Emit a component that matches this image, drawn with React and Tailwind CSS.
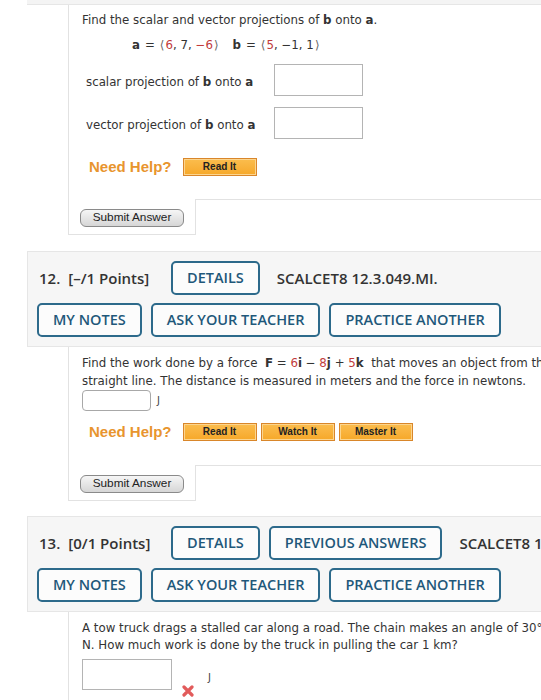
import React from "react";

const body = { fontFamily: '"DejaVu Sans", Verdana, sans-serif' };
const sans = { fontFamily: '"Open Sans", "Noto Sans", sans-serif' };
const arial = { fontFamily: '"Liberation Sans", Arial, sans-serif' };

function R({ children }) {
  return <span className="text-[#c23b3b]">{children}</span>;
}

function L() {
  return <span className="text-[#666] mr-[1px]">⟨</span>;
}
function Rb() {
  return <span className="text-[#666] ml-[1px]">⟩</span>;
}

function OrangeBtn({ children, w = "w-[74px]" }) {
  return (
    <div
      className={`${w} h-[18px] flex items-center justify-center border border-[#d9862a] bg-gradient-to-b from-[#fbbd4d] to-[#f6a828] shadow-[inset_0_0_0_1px_#fcd58e] text-[10px] font-bold text-[#222]`}
      style={arial}
    >
      {children}
    </div>
  );
}

function NeedHelp({ buttons }) {
  return (
    <div className="flex items-center pl-[7px]">
      <span className="text-[15px] font-bold text-[#e8952e] mr-[11px]" style={arial}>
        Need Help?
      </span>
      <div className="flex gap-[4px]">
        {buttons.map((b) => (
          <OrangeBtn key={b}>{b}</OrangeBtn>
        ))}
      </div>
    </div>
  );
}

function SubmitRow() {
  return (
    <div className="flex">
      <div className="w-[128px] h-[36px] border-l border-r border-b border-[#e2e2e2] pl-[11px] pt-[10px]">
        <div
          className="w-[104px] h-[18px] rounded-[6px] border border-[#8a8a8a] bg-gradient-to-b from-[#f6f6f6] to-[#d6d6d6] flex items-center justify-center text-[11.8px] text-[#222]"
          style={arial}
        >
          Submit Answer
        </div>
      </div>
      <div className="flex-1 border-t border-[#e2e2e2]" />
    </div>
  );
}

function TealBtn({ children }) {
  return (
    <div className="h-[34px] px-[14px] flex items-center border-2 border-[#2d6a8b] rounded-[5px] bg-[#fcfcfc] text-[14.5px] font-semibold text-[#1f587a] whitespace-nowrap">
      {children}
    </div>
  );
}

function Header({ num, points, row1, code }) {
  return (
    <div
      className="ml-[27px] bg-[#f6f6f6] border border-[#e6e6e6] pl-[9px] pt-[9px] pb-[9px] flex flex-col gap-[8px]"
      style={sans}
    >
      <div className="flex items-center">
        <div className="w-[134px] pl-[2px] text-[15px] font-semibold text-[#333] whitespace-nowrap">
          {num}
          <span className="ml-[8px]">{points}</span>
        </div>
        <div className="flex gap-[9px]">
          {row1.map((b) => (
            <TealBtn key={b}>{b}</TealBtn>
          ))}
        </div>
        <div className="ml-[17px] text-[15px] font-semibold text-[#333] whitespace-nowrap">{code}</div>
      </div>
      <div className="flex gap-[9px]">
        <TealBtn>MY NOTES</TealBtn>
        <TealBtn>ASK YOUR TEACHER</TealBtn>
        <TealBtn>PRACTICE ANOTHER</TealBtn>
      </div>
    </div>
  );
}

function Cross() {
  return (
    <svg width="12" height="12" viewBox="0 0 12 12">
      <path d="M2 2 L10 10 M10 2 L2 10" stroke="#e25b5b" strokeWidth="3.2" strokeLinecap="round" />
    </svg>
  );
}

export default function App() {
  return (
    <div className="w-[541px] h-[700px] overflow-hidden bg-white text-[#333]" style={body}>
      <div className="w-[820px]">
        {/* previous header remnant */}
        <div className="ml-[27px] h-[5px] bg-[#f4f4f4] border-b border-[#e6e6e6]" />

        {/* Question 11 body */}
        <div className="ml-[68px]">
          <div className="border-l border-[#e2e2e2] pl-[13px] pt-[6px] pb-[23px] text-[11.8px] leading-[18px]">
            <div>
              Find the scalar and vector projections of <b>b</b> onto <b>a</b>.
            </div>
            <div className="mt-[7px] pl-[50px] whitespace-nowrap flex items-center">
              <span>
                <b>a</b>
                <span className="mx-[5px]">=</span>
                <L />
                <R>6</R>, 7, <R>−6</R>
                <Rb />
              </span>
              <span className="ml-[14px]">
                <b>b</b>
                <span className="mx-[5px]">=</span>
                <L />
                <R>5</R>, −1, 1
                <Rb />
              </span>
            </div>
            <div className="mt-[10px] flex items-center pl-[4px]">
              <div className="w-[188px] pt-[3px]">
                scalar projection of <b>b</b> onto <b>a</b>
              </div>
              <div className="w-[89px] h-[32px] border border-[#b4b4b4] bg-white" />
            </div>
            <div className="mt-[11px] flex items-center pl-[4px]">
              <div className="w-[188px] pt-[3px]">
                vector projection of <b>b</b> onto <b>a</b>
              </div>
              <div className="w-[89px] h-[32px] border border-[#b4b4b4] bg-white" />
            </div>
            <div className="mt-[19px]">
              <NeedHelp buttons={["Read It"]} />
            </div>
          </div>
          <SubmitRow />
        </div>

        <div className="mt-[16px]">
          <Header num="12." points="[–/1 Points]" row1={["DETAILS"]} code="SCALCET8 12.3.049.MI." />
        </div>

        {/* Question 12 body */}
        <div className="ml-[68px]">
          <div className="border-l border-[#e2e2e2] pl-[13px] pt-[7px] pb-[24px] text-[11.8px] leading-[18px]">
            <div className="whitespace-nowrap">
              Find the work done by a force{" "}
              <span className="whitespace-pre">
                {" "}<b>F</b> = <R>6</R><b>i</b> − <R>8</R><b>j</b> + <R>5</R><b>k</b>{"  "}
              </span>
              that moves an object from the point (0, 10, 8) to the point (6, 12, 20) along a
            </div>
            <div>straight line. The distance is measured in meters and the force in newtons.</div>
            <div className="flex items-center">
              <div className="w-[69px] h-[21px] border border-[#a8a8a8] rounded-[4px] bg-white" />
              <span className="ml-[6px] text-[10px] text-[#444]">J</span>
            </div>
            <div className="mt-[12px]">
              <NeedHelp buttons={["Read It", "Watch It", "Master It"]} />
            </div>
          </div>
          <SubmitRow />
        </div>

        <div className="mt-[15px]">
          <Header
            num="13."
            points="[0/1 Points]"
            row1={["DETAILS", "PREVIOUS ANSWERS"]}
            code="SCALCET8 12.3.050."
          />
        </div>

        {/* Question 13 body */}
        <div className="ml-[68px] border-l border-[#e2e2e2] pl-[13px] pt-[8px] text-[11.8px] leading-[17px] h-[120px]">
          <div className="whitespace-nowrap">
            A tow truck drags a stalled car along a road. The chain makes an angle of 30° with the road and the tension in the chain is 1500
          </div>
          <div>N. How much work is done by the truck in pulling the car 1 km?</div>
          <div className="mt-[5px] flex">
            <div className="w-[90px] h-[31px] border border-[#b4b4b4] bg-white" />
            <div className="ml-[10px] mt-[26px]">
              <Cross />
            </div>
            <span className="ml-[14px] mt-[10px] text-[10px] text-[#444]">J</span>
          </div>
        </div>
      </div>
    </div>
  );
}
